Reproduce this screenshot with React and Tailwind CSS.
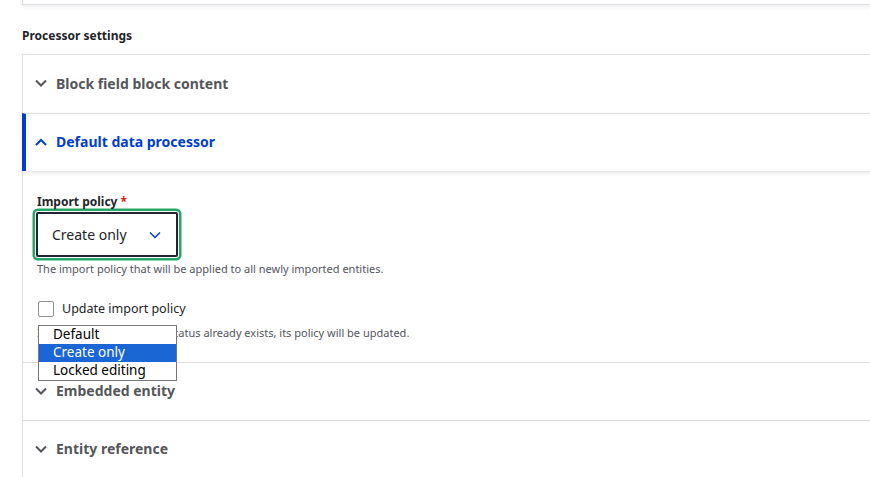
import React from 'react'

const font = { fontFamily: '"Noto Sans", "Open Sans", sans-serif' }

function Chevron({ up, className, stroke = 2 }) {
  return (
    <svg width="12" height="8" viewBox="0 0 12 8" className={className} fill="none">
      {up ? (
        <path d="M1 7L6 2L11 7" stroke="currentColor" strokeWidth={stroke} />
      ) : (
        <path d="M1 1.5L6 6.5L11 1.5" stroke="currentColor" strokeWidth={stroke} />
      )}
    </svg>
  )
}

function Header({ title }) {
  return (
    <div className="h-[58px] border-t border-l border-[#dedfe4] flex items-center pl-[12px] pb-[2px] text-[#55565b]">
      <Chevron className="mr-[9px]" />
      <span className="text-[14px] font-bold">{title}</span>
    </div>
  )
}

export default function App() {
  return (
    <div className="relative w-[870px] h-[477px] overflow-hidden bg-white pl-[22px] text-[#232429]" style={font}>
      {/* box above, cut off */}
      <div className="w-[900px] h-[5px] border-l border-b border-[#dedfe4] shadow-[0_2px_4px_rgba(0,0,0,0.08)]"></div>

      <h3 className="mt-[22px] text-[12px] leading-[18px] font-bold">Processor settings</h3>

      <div className="mt-[9px] w-[900px]">
        <div className="h-[59px] border-t border-l border-[#dedfe4] flex items-center pl-[12px] pb-[2px] text-[#55565b]">
          <Chevron className="mr-[9px]" />
          <span className="text-[14px] font-bold">Block field block content</span>
        </div>

        <div className="h-[58px] border-t border-[#dedfe4] border-l-4 border-l-[#003ecc] flex items-center pl-[9px] pb-[2px] text-[#003ecc] shadow-[0_2px_4px_rgba(0,0,0,0.1)] relative">
          <Chevron up className="mr-[9px]" />
          <span className="text-[14px] font-bold">Default data processor</span>
        </div>

        <div className="border-l border-[#dedfe4] pl-[13px] pt-[24px] pb-[21px]">
          <label className="block pl-[1px] text-[12px] leading-[14px] font-bold">
            Import policy <span className="text-[#d72222]">*</span>
          </label>
          <div className="mt-[3px] w-[142px] h-[45px] border-2 border-[#222330] rounded-[2px] ring-[2.5px] ring-[#26a769] ring-offset-1 flex items-center justify-between pl-[14px] pr-[15px]">
            <span className="text-[14px]">Create only</span>
            <Chevron stroke={1.5} className="text-[#003ecc]" />
          </div>
          <p className="mt-[4px] pl-[1px] text-[11px] leading-[16px] text-[#545560]">
            The import policy that will be applied to all newly imported entities.
          </p>

          <div className="mt-[22px] h-[20px] flex items-center">
            <span className="w-[16px] h-[16px] border border-[#8e929c] rounded-[2px] ml-[2px]"></span>
            <span className="ml-[8px] text-[12.5px]">Update import policy</span>
          </div>
          <p className="mt-[6px] pl-[1px] text-[11px] leading-[16px] text-[#545560]">
            If the item with the same status already exists, its policy will be updated.
          </p>
        </div>

        <Header title="Embedded entity" />
        <Header title="Entity reference" />
      </div>

      {/* open select list */}
      <ul className="absolute left-[38px] top-[325px] w-[139px] border border-[#767676] bg-white text-[13.5px] leading-[17px] text-black">
        <li className="pl-[14px] h-[18px]">Default</li>
        <li className="pl-[14px] h-[18px] bg-[#1a66d5] text-white">Create only</li>
        <li className="pl-[14px] h-[18px]">Locked editing</li>
      </ul>
    </div>
  )
}
